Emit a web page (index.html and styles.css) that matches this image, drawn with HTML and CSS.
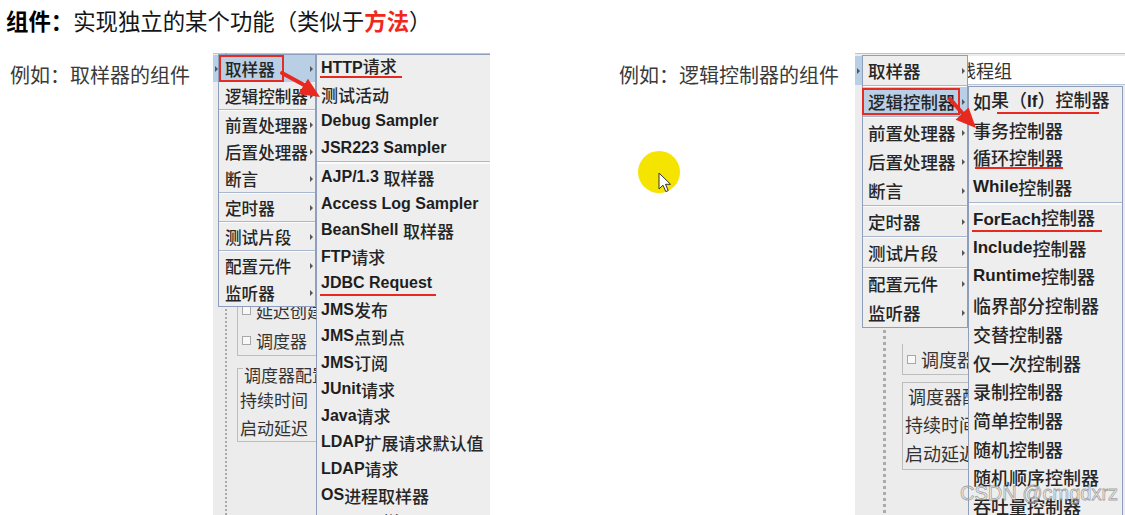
FILE: index.html
```html
<!DOCTYPE html>
<html lang="zh-CN">
<head>
<meta charset="utf-8">
<title>组件</title>
<link rel="stylesheet" href="styles.css">
</head>
<body>
<h1 class="title"><b>组件：</b>实现独立的某个功能（类似于<b class="red">方法</b>）</h1>
<div class="stage">
  <p class="caption cap-left">例如：取样器的组件</p>

  <div class="fig fig-left">
    <div class="jm jm-l">
      <div class="jm-box">
        <div class="jm-row"><i class="chk"></i>延迟创建</div>
        <div class="jm-row"><i class="chk"></i>调度器</div>
      </div>
      <div class="jm-group">
        <div class="jm-gtitle"><span>调度器配置</span></div>
        <div class="jm-row">持续时间</div>
        <div class="jm-row">启动延迟</div>
      </div>
    </div>

    <div class="strip strip-l"><i class="tri"></i></div>

    <div class="menu main main-l">
      <div class="item hl"><span>取样器</span><i class="tri"></i></div>
      <div class="item"><span>逻辑控制器</span><i class="tri"></i></div>
      <div class="sep"></div>
      <div class="item"><span>前置处理器</span><i class="tri"></i></div>
      <div class="item"><span>后置处理器</span><i class="tri"></i></div>
      <div class="item"><span>断言</span><i class="tri"></i></div>
      <div class="sep"></div>
      <div class="item"><span>定时器</span><i class="tri"></i></div>
      <div class="sep"></div>
      <div class="item"><span>测试片段</span><i class="tri"></i></div>
      <div class="sep"></div>
      <div class="item"><span>配置元件</span><i class="tri"></i></div>
      <div class="item"><span>监听器</span><i class="tri"></i></div>
    </div>

    <div class="menu sub sub-l">
      <div class="item"><span class="ul ul-http"><b>HTTP</b>请求</span></div>
      <div class="item">测试活动</div>
      <div class="item"><b>Debug Sampler</b></div>
      <div class="item"><b>JSR223 Sampler</b></div>
      <div class="sep"></div>
      <div class="item"><b>AJP/1.3</b>&nbsp;取样器</div>
      <div class="item"><b>Access Log Sampler</b></div>
      <div class="item"><b>BeanShell</b>&nbsp;取样器</div>
      <div class="item"><b>FTP</b>请求</div>
      <div class="item"><span class="ul ul-jdbc"><b>JDBC Request</b></span></div>
      <div class="item"><b>JMS</b>发布</div>
      <div class="item"><b>JMS</b>点到点</div>
      <div class="item"><b>JMS</b>订阅</div>
      <div class="item"><b>JUnit</b>请求</div>
      <div class="item"><b>Java</b>请求</div>
      <div class="item"><b>LDAP</b>扩展请求默认值</div>
      <div class="item"><b>LDAP</b>请求</div>
      <div class="item"><b>OS</b>进程取样器</div>
      <div class="item"><b>SMTP</b>取样器</div>
    </div>

    <div class="redbox rb-l"></div>
    <svg class="arrow" width="277" height="120" viewBox="0 0 277 120">
      <line x1="69" y1="20" x2="92" y2="32.5" stroke="#e8291f" stroke-width="4" stroke-linecap="round"/>
      <polygon points="107,44 85.3,40.9 94.9,25.7" fill="#e8291f"/>
    </svg>
  </div>

  <div class="col-right">
    <p class="caption">例如：逻辑控制器的组件</p>
    <div class="pointer">
      <svg class="cursor" width="14" height="21" viewBox="0 0 14 21">
        <path d="M1 1 L1 17 L5 13.2 L7.8 19.6 L10.2 18.6 L7.5 12.3 L12.6 12.3 Z" fill="#fff" stroke="#333" stroke-width="1" stroke-linejoin="round"/>
      </svg>
    </div>
  </div>

  <div class="fig fig-right">
    <div class="field">线程组</div>
    <div class="jm jm-r">
      <div class="jm-box">
        <div class="jm-row"><i class="chk"></i>调度器</div>
      </div>
      <div class="jm-group">
        <div class="jm-gtitle"><span>调度器配置</span></div>
        <div class="jm-row">持续时间</div>
        <div class="jm-row">启动延迟</div>
      </div>
    </div>

    <div class="strip strip-r"><i class="tri"></i></div>

    <div class="menu main main-r">
      <div class="item"><span>取样器</span><i class="tri"></i></div>
      <div class="sep"></div>
      <div class="item hl"><span>逻辑控制器</span><i class="tri"></i></div>
      <div class="sep"></div>
      <div class="item"><span>前置处理器</span><i class="tri"></i></div>
      <div class="item"><span>后置处理器</span><i class="tri"></i></div>
      <div class="item"><span>断言</span><i class="tri"></i></div>
      <div class="sep"></div>
      <div class="item"><span>定时器</span><i class="tri"></i></div>
      <div class="sep"></div>
      <div class="item"><span>测试片段</span><i class="tri"></i></div>
      <div class="sep"></div>
      <div class="item"><span>配置元件</span><i class="tri"></i></div>
      <div class="item"><span>监听器</span><i class="tri"></i></div>
    </div>

    <div class="menu sub sub-r">
      <div class="item">如<span class="ul ul-if">果（<b>If</b>）控制器</span></div>
      <div class="item">事务控制器</div>
      <div class="item"><span class="ul ul-loop">循环控制器</span></div>
      <div class="item"><b>While</b>控制器</div>
      <div class="sep"></div>
      <div class="item"><span class="ul ul-each"><b>ForEach</b>控制器</span></div>
      <div class="item"><b>Include</b>控制器</div>
      <div class="item"><b>Runtime</b>控制器</div>
      <div class="item">临界部分控制器</div>
      <div class="item">交替控制器</div>
      <div class="item">仅一次控制器</div>
      <div class="item">录制控制器</div>
      <div class="item">简单控制器</div>
      <div class="item">随机控制器</div>
      <div class="item">随机顺序控制器</div>
      <div class="item">吞吐量控制器</div>
    </div>

    <div class="redbox rb-r"></div>
    <svg class="arrow" width="270" height="120" viewBox="0 0 270 120">
      <line x1="95" y1="46" x2="109" y2="62" stroke="#e8291f" stroke-width="4" stroke-linecap="round"/>
      <polygon points="121,75 100.6,66.8 113.6,54.4" fill="#e8291f"/>
    </svg>
    <div class="wm">CSDN @cmgdxrz</div>
  </div>
</div>
</body>
</html>
```

FILE: styles.css
```css
* { box-sizing: border-box; }
html, body { margin: 0; padding: 0; }
body {
  width: 1125px;
  height: 515px;
  overflow: hidden;
  background: #fff;
  font-family: "Noto Sans CJK SC", "Liberation Sans", sans-serif;
  color: #222;
}

.title {
  margin: 0;
  padding-left: 6px;
  height: 40px;
  font-size: 22.4px;
  line-height: 40px;
  font-weight: 400;
  color: #151515;
  white-space: nowrap;
}
.title b { font-weight: 700; color: #000; }
.title .red { color: #f0281c; }

.stage {
  display: grid;
  grid-template-columns: 213px 277px 129px 236px 270px;
  align-items: start;
}
.caption {
  margin: 24px 0 0;
  font-size: 20px;
  line-height: 22px;
  color: #3a3a3a;
  white-space: nowrap;
}
.cap-left { grid-column: 1; padding-left: 10px; }
.fig-left { grid-column: 2; }
.col-right { grid-column: 4; }
.fig-right { grid-column: 5; }

.pointer {
  position: relative;
  margin: 65px 0 0 19px;
  width: 42px;
  height: 42px;
  border-radius: 50%;
  background: #f5e300;
}
.cursor { position: absolute; left: 20px; top: 21px; }

/* screenshot figures */
.fig {
  margin-top: 13px;
  height: 462px;
  position: relative;
  overflow: hidden;
  background: #ececec;
  box-shadow: inset 0 1px 0 #c4c4c4;
}

/* JMeter panel underneath the menus (clipped where the sub menu covers it) */
.jm { height: 470px; color: #333; white-space: nowrap; overflow: hidden; }
.jm-l {
  margin-left: 12px;
  width: 91px;
  padding: 242px 0 0 10px;
  border-left: 2px dotted #a9a9a9;
  font-size: 17px;
}
.jm-r {
  margin-left: 28px;
  width: 85px;
  padding: 259px 0 0 16px;
  border-left: 3px dotted #ababab;
  font-size: 18px;
}
.jm-box {
  border-left: 1px solid #bdbdbd;
  border-bottom: 1px solid #bdbdbd;
  padding-left: 4px;
}
.jm-row { display: flex; align-items: center; height: 30px; overflow: hidden; }
.chk {
  flex: none;
  width: 9px;
  height: 9px;
  margin-right: 5px;
  border: 1px solid #a8a8a8;
  background: #f8f8f8;
}
.jm-group {
  border: 1px solid #bdbdbd;
  border-right: 0;
  padding: 0 0 0 2px;
}
.jm-l .jm-group { margin-top: 12px; }
.jm-l .jm-gtitle { height: 20px; line-height: 20px; margin-top: -4px; padding-left: 3px; overflow: hidden; }
.jm-l .jm-gtitle span { background: #ececec; padding: 0 1px; }
.jm-l .jm-group .jm-row { height: 28px; }
.jm-r .jm-group { margin-top: 7px; padding-bottom: 2px; }
.jm-r .jm-gtitle { height: 26px; line-height: 26px; padding-left: 3px; overflow: hidden; }
.jm-r .jm-group .jm-row { height: 29px; }

.field {
  margin: 3px 0 0 103px;
  height: 29px;
  background: #fff;
  border-bottom: 1px solid #b9c4d4;
  font-size: 18px;
  line-height: 28px;
  color: #333;
}

/* menus */
.strip {
  position: absolute;
  left: 0;
  display: flex;
  align-items: center;
  justify-content: flex-end;
  background: #b8cfe5;
}
.strip-l { top: 2px; width: 5px; height: 27px; }
.strip-r { top: 3px; width: 7px; height: 29px; padding-right: 2px; }

.menu {
  position: absolute;
  background: #eeeeee;
  border: 1px solid #8d9fbd;
}
.item {
  display: flex;
  align-items: center;
  white-space: nowrap;
  color: #262626;
  font-weight: 500;
}
.main .item { justify-content: space-between; }
.hl { background: #b8cfe5; }
.tri {
  width: 0;
  height: 0;
  border-left: 3px solid #555;
  border-top: 3px solid transparent;
  border-bottom: 3px solid transparent;
}
.sep {
  height: 2px;
  border-top: 1px solid #a9b8d0;
  background: #fbfbfb;
}

.main-l { left: 5px; top: 1px; width: 98px; }
.main-l .item { height: 27px; padding: 0 2px 0 6px; font-size: 16.6px; }

.sub-l { left: 103px; top: 1px; width: 200px; height: 480px; }
.sub-l .item {
  height: 26.5px;
  padding-left: 4px;
  font-size: 17px;
  font-family: "Liberation Sans", "Noto Sans CJK SC", sans-serif;
}
.sub-l .item b { font-size: 16px; font-weight: 700; color: #1e1e1e; }
.sub-l .sep { height: 3px; }

.main-r { left: 7px; top: 2px; width: 106px; }
.main-r .item { height: 29px; padding: 0 2px 0 5px; font-size: 17.5px; }

.sub-r { left: 113px; top: 33px; width: 155px; height: 440px; }
.sub-r .item {
  height: 28.7px;
  padding-left: 4px;
  font-size: 18px;
  font-family: "Liberation Sans", "Noto Sans CJK SC", sans-serif;
}
.sub-r .item b { font-size: 17px; font-weight: 700; color: #1e1e1e; }
.sub-r .sep { height: 3px; }

/* annotations */
.ul { position: relative; display: inline-block; line-height: 18px; }
.ul::after {
  content: "";
  position: absolute;
  height: 2px;
  background: #e8291f;
}
.ul-http::after { left: -1px; right: -5px; bottom: -1px; }
.ul-jdbc::after { left: -1px; right: -4px; bottom: -4px; }
.ul-if::after { left: 6px; right: 10px; bottom: -3px; }
.ul-loop::after { left: 2px; right: 0; bottom: -1px; }
.ul-each::after { left: -1px; right: -7px; bottom: -3px; }

.redbox {
  position: absolute;
  border: 2px solid #e52b22;
}
.rb-l { left: 6px; top: 2px; width: 65px; height: 27px; }
.rb-r { left: 7px; top: 35px; width: 98px; height: 27px; }

.arrow { position: absolute; left: 0; top: 0; }

.wm {
  position: absolute;
  left: 105px;
  top: 429px;
  font-family: "Liberation Sans", sans-serif;
  font-size: 20px;
  line-height: 22px;
  white-space: nowrap;
  color: rgba(255, 255, 255, 0.4);
  -webkit-text-stroke: 0.8px rgba(135, 135, 135, 0.75);
}
```
